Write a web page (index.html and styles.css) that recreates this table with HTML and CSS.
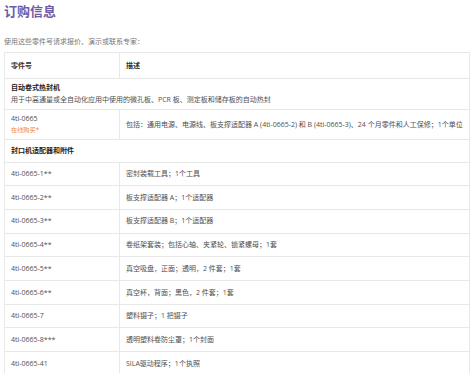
FILE: index.html
```html
<!DOCTYPE html>
<html lang="zh-CN">
<head>
    <meta charset="UTF-8">
    <title>订购信息</title>
    <link rel="stylesheet" href="styles.css">
</head>
<body>
    <div class="order-info">
        <h2 class="order-title">订购信息</h2>
        <p class="order-intro">使用这些零件号请求报价、演示或联系专家：</p>

        <table class="parts-table">
            <thead>
                <tr>
                    <th class="col-part">零件号</th>
                    <th>描述</th>
                </tr>
            </thead>
            <tbody>
                <tr class="group-row">
                    <td colspan="2">
                        <strong>自动卷式热封机</strong>
                        <span class="group-desc">用于中高通量或全自动化应用中使用的微孔板、PCR 板、测定板和储存板的自动热封</span>
                    </td>
                </tr>
                <tr class="product-row">
                    <td>4ti-0665<a href="#" class="buy-link">在线购买*</a></td>
                    <td>包括：通用电源、电源线、板支撑适配器 A (4ti-0665-2) 和 B (4ti-0665-3)、24 个月零件和人工保修；1个单位</td>
                </tr>
                <tr class="group-row">
                    <td colspan="2"><strong>封口机适配器和附件</strong></td>
                </tr>
                <tr>
                    <td>4ti-0665-1**</td>
                    <td>密封装载工具；1个工具</td>
                </tr>
                <tr>
                    <td>4ti-0665-2**</td>
                    <td>板支撑适配器 A；1个适配器</td>
                </tr>
                <tr>
                    <td>4ti-0665-3**</td>
                    <td>板支撑适配器 B；1个适配器</td>
                </tr>
                <tr>
                    <td>4ti-0665-4**</td>
                    <td>卷纸架套装；包括心轴、夹紧轮、锁紧螺母；1套</td>
                </tr>
                <tr>
                    <td>4ti-0665-5**</td>
                    <td>真空吸盘，正面；透明，2 件套；1套</td>
                </tr>
                <tr>
                    <td>4ti-0665-6**</td>
                    <td>真空杯，背面；黑色，2 件套；1套</td>
                </tr>
                <tr>
                    <td>4ti-0665-7</td>
                    <td>塑料镊子；1 把镊子</td>
                </tr>
                <tr>
                    <td>4ti-0665-8***</td>
                    <td>透明塑料卷防尘罩；1个封面</td>
                </tr>
                <tr>
                    <td>4ti-0665-41</td>
                    <td>SILA驱动程序；1个执照</td>
                </tr>
            </tbody>
        </table>
    </div>
</body>
</html>
```

FILE: styles.css
```css
body {
    margin: 0;
    padding: 0;
    background-color: #ffffff;
    color: #555555;
    font-family: 'Open Sans', 'Noto Sans CJK SC', sans-serif;
}

.order-info {
    padding: 2px 4px 0 4px;
}

.order-title {
    margin: 0;
    font-size: 13px;
    line-height: 18px;
    font-weight: 700;
    color: #6f5ba8;
}

/* intro line above the table */
.order-intro {
    margin: 17px 0 0 0;
    font-size: 7px;
    line-height: 10px;
    color: #777777;
}

.parts-table {
    width: 466px;
    margin-top: 5px;
    border-collapse: collapse;
    font-size: 7px;
    line-height: 9.5px;
}

.parts-table th,
.parts-table td {
    border: 1px solid #e8e8e8;
    padding: 6.6px 6px;
    text-align: left;
    vertical-align: middle;
}

.parts-table th {
    padding: 7.5px 6px;
    font-weight: 700;
    color: #333333;
}

.col-part {
    width: 102px;
}

.parts-table td {
    color: #4f4f4f;
}

.group-row td {
    padding: 6.25px 6px;
}

.group-row:first-child td {
    padding: 4px 6px;
    line-height: 10px;
}

.group-row strong {
    display: block;
    color: #222222;
    font-weight: 700;
}

.group-desc {
    display: block;
    margin-top: 2px;
    color: #4f4f4f;
}

.product-row td {
    padding: 3.5px 6px;
    line-height: 11px;
}

.buy-link {
    display: block;
    color: #f0853f;
    text-decoration: none;
    font-size: 6.2px;
}
```
